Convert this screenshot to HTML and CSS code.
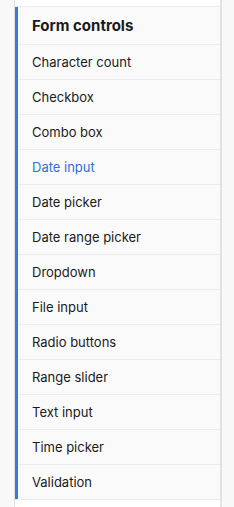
FILE: index.html
```html
<!DOCTYPE html>
<html>
<head>
    <title>Form controls</title>
    <link rel="stylesheet" href="styles.css">
</head>
<body>
    <nav class="sidenav">
        <div class="prev-item"></div>
        <div class="group">
            <div class="group-title">Form controls</div>
            <a class="item" href="#">Character count</a>
            <a class="item" href="#">Checkbox</a>
            <a class="item" href="#">Combo box</a>
            <a class="item current" href="#">Date input</a>
            <a class="item" href="#">Date picker</a>
            <a class="item" href="#">Date range picker</a>
            <a class="item" href="#">Dropdown</a>
            <a class="item" href="#">File input</a>
            <a class="item" href="#">Radio buttons</a>
            <a class="item" href="#">Range slider</a>
            <a class="item" href="#">Text input</a>
            <a class="item" href="#">Time picker</a>
            <a class="item" href="#">Validation</a>
        </div>
        <div class="next-item"></div>
    </nav>
</body>
</html>
```

FILE: styles.css
```css
body {
    margin: 0;
    background: #f8f8f8;
    font-family: Inter, "Liberation Sans", sans-serif;
    color: #1b1b1b;
}
.sidenav {
    width: 205px;
    margin-left: 14px;
    height: 507px;
    border-left: 1px solid #dfe1e2;
    border-right: 2px solid #e3e3e3;
    background: #fff;
    overflow: hidden;
}
.prev-item {
    height: 6px;
    border-bottom: 1px solid #ececec;
    background: #fff;
}
.group {
    margin-left: -1px;
    border-left: 4px solid #3a78da;
    background: #fafafa;
}
.group-title {
    height: 37px;
    line-height: 38px;
    padding-left: 14px;
    font-size: 15px;
    font-weight: 700;
}
.item {
    display: block;
    height: 34px;
    line-height: 35px;
    padding-left: 14px;
    border-top: 1px solid #ececec;
    font-size: 13px;
    color: #1b1b1b;
    text-decoration: none;
}
.item.current {
    color: #2f6fd6;
}
.next-item {
    border-top: 1px solid #ececec;
    height: 10px;
    background: #fff;
}
```
